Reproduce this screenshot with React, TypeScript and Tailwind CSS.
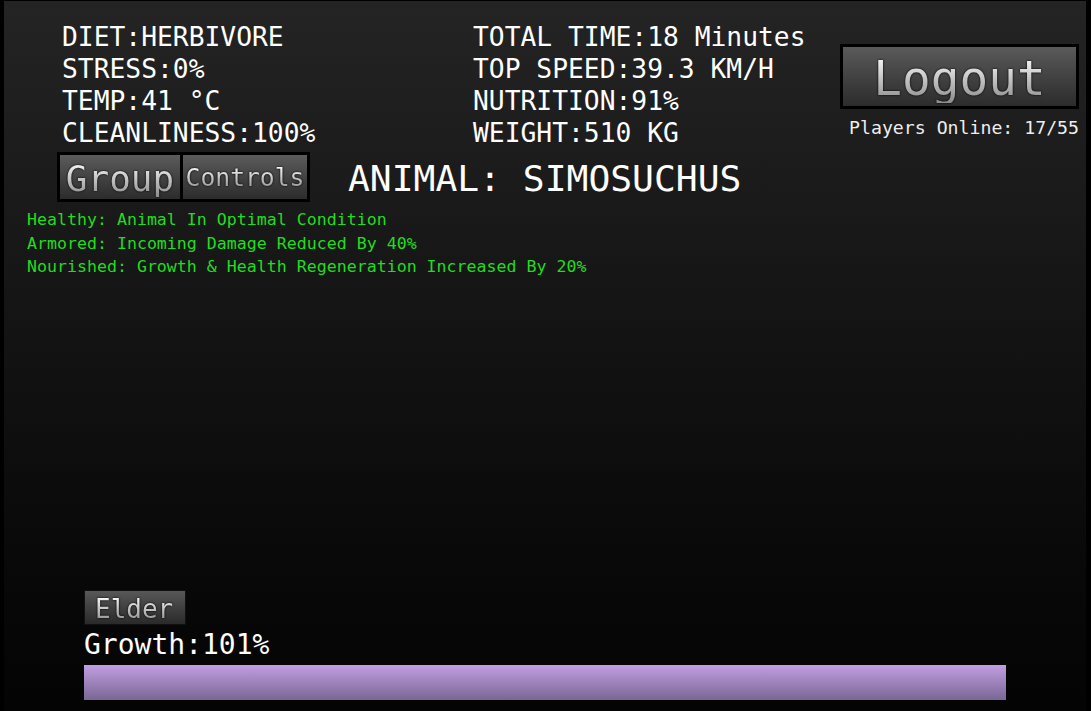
import React from 'react';

const mono = { fontFamily: '"DejaVu Sans Mono", "Liberation Mono", monospace' };

// Engraved-looking button label: light gradient fill with a dark rim
function ButtonLabel({ text, className = '' }: { text: string; className?: string }) {
  return (
    <span
      className={`bg-gradient-to-b from-white to-[#8c8c8c] bg-clip-text text-transparent drop-shadow-[0_0_1px_#000] ${className}`}
    >
      {text}
    </span>
  );
}

const leftStats = ['DIET:HERBIVORE', 'STRESS:0%', 'TEMP:41 °C', 'CLEANLINESS:100%'];
const rightStats = ['TOTAL TIME:18 Minutes', 'TOP SPEED:39.3 KM/H', 'NUTRITION:91%', 'WEIGHT:510 KG'];
const effects = [
  'Healthy: Animal In Optimal Condition',
  'Armored: Incoming Damage Reduced By 40%',
  'Nourished: Growth & Health Regeneration Increased By 20%',
];

export default function App() {
  const growth = 101;

  return (
    <div
      style={mono}
      className="flex h-[711px] w-full flex-col overflow-hidden border-t border-l-4 border-r-[5px] border-black bg-gradient-to-b from-[#242424] to-[#040404] text-white"
    >
      {/* Top stats + logout */}
      <div className="flex">
        <div className="w-[469px] shrink-0 pl-[58px] pt-[20px] text-[26.3px] leading-[32px]">
          {leftStats.map((s) => (
            <div key={s} className="whitespace-pre">{s}</div>
          ))}
        </div>
        <div className="pt-[20px] text-[26.3px] leading-[32px]">
          {rightStats.map((s) => (
            <div key={s} className="whitespace-pre">{s}</div>
          ))}
        </div>
        <div className="ml-auto mr-[7px] flex flex-col items-end pt-[43px]">
          <button className="flex h-[65px] w-[239px] items-center justify-center border-[3px] border-black bg-gradient-to-b from-[#5a5a5a] to-[#2c2c2c] pt-[5px]">
            <ButtonLabel text="Logout" className="text-[47.7px] leading-none" />
          </button>
          <div className="mt-[8px] text-[18.2px] leading-[22px] text-[#eeeeee]">Players Online: 17/55</div>
        </div>
      </div>

      {/* Group / Controls + animal name */}
      <div className="mt-[3px] flex items-center">
        <div className="ml-[53px] flex">
          <button className="flex h-[50px] w-[126px] items-center justify-center border-[3px] border-black bg-gradient-to-b from-[#5c5c5c] to-[#2c2c2c] pt-[3px]">
            <ButtonLabel text="Group" className="text-[36px] leading-none" />
          </button>
          <button className="flex h-[50px] w-[127px] items-center justify-center border-y-[3px] border-r-[3px] border-black bg-gradient-to-b from-[#5c5c5c] to-[#2c2c2c] pt-[2px]">
            <ButtonLabel text="Controls" className="text-[24.7px] leading-none" />
          </button>
        </div>
        <div className="ml-[38px] pt-[4px] text-[36.3px] leading-none whitespace-pre">ANIMAL: SIMOSUCHUS</div>
      </div>

      {/* Status effects */}
      <div className="mt-[6px] pl-[23px] text-[16.6px] leading-[23.5px] text-[#20dd20]">
        {effects.map((e) => (
          <div key={e} className="whitespace-pre">{e}</div>
        ))}
      </div>

      {/* Growth */}
      <div className="mt-auto pb-[11px] pl-[80px]">
        <div className="flex h-[35px] w-[102px] items-center border border-[#111] bg-gradient-to-b from-[#585858] to-[#2a2a2a] pl-[10px] pt-[3px]">
          <ButtonLabel text="Elder" className="text-[26px] leading-none" />
        </div>
        <div className="mt-[4px] text-[28px] leading-[32px]">Growth:{growth}%</div>
        <div className="mt-[4px] h-[35px] w-[922px] bg-gradient-to-b from-[#c29fe2] to-[#7a6795]" />
      </div>
    </div>
  );
}
